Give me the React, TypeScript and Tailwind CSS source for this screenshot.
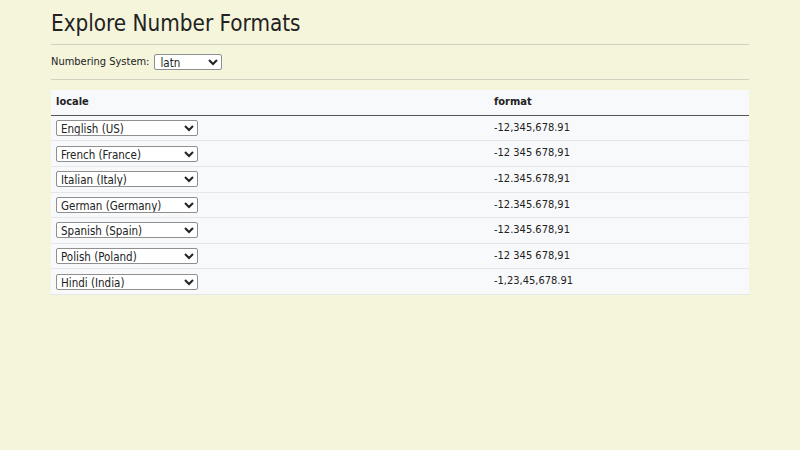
import React, { useState } from 'react'

const LOCALES = [
  { code: 'en-US', name: 'English (US)', format: '-12,345,678.91' },
  { code: 'fr-FR', name: 'French (France)', format: '-12 345 678,91' },
  { code: 'it-IT', name: 'Italian (Italy)', format: '-12.345.678,91' },
  { code: 'de-DE', name: 'German (Germany)', format: '-12.345.678,91' },
  { code: 'es-ES', name: 'Spanish (Spain)', format: '-12.345.678,91' },
  { code: 'pl-PL', name: 'Polish (Poland)', format: '-12 345 678,91' },
  { code: 'hi-IN', name: 'Hindi (India)', format: '-1,23,45,678.91' },
]

export default function App() {
  const [system, setSystem] = useState('latn')

  return (
    <div className="min-h-screen bg-[#f5f5dc] text-[#222] font-['DejaVu_Sans_Condensed','DejaVu_Sans',sans-serif] font-stretch-condensed">
      <div className="w-[698px] mx-auto">
        <h1 className="text-[22.3px] leading-none pt-[12px] pb-[10px]">Explore Number Formats</h1>
        <hr className="border-t border-[#d2d0bf]" />

        <div className="flex items-center gap-[5px] h-[34px] text-[11px]">
          <label>Numbering System:</label>
          <select
            value={system}
            onChange={(e) => setSystem(e.target.value)}
            className="w-[68px] h-[16px] py-0 text-[11.5px] leading-none bg-white border border-[#8f8f8f] rounded-[2px] pl-[1px]"
          >
            <option value="latn">latn</option>
            <option value="arab">arab</option>
            <option value="deva">deva</option>
          </select>
        </div>
        <hr className="border-t border-[#d2d0bf]" />

        <table className="w-full mt-[10px] bg-[#f8f9fa] text-[11px] border-collapse">
          <thead>
            <tr className="h-[25px] border-b border-[#555]">
              <th className="text-left font-bold pl-[5px] w-[438px]">locale</th>
              <th className="text-left font-bold pl-[5px]">format</th>
            </tr>
          </thead>
          <tbody>
            {LOCALES.map((l) => (
              <tr key={l.code} className="h-[25.6px] border-b border-[#e4e6e8]">
                <td className="pl-[5px]">
                  <select
                    defaultValue={l.code}
                    className="w-[142px] h-[16px] py-0 text-[11.5px] leading-none bg-white border border-[#8f8f8f] rounded-[2px] pl-0 block"
                  >
                    {LOCALES.map((o) => (
                      <option key={o.code} value={o.code}>{o.name}</option>
                    ))}
                  </select>
                </td>
                <td className="pl-[5px]">{l.format}</td>
              </tr>
            ))}
          </tbody>
        </table>
      </div>
    </div>
  )
}
